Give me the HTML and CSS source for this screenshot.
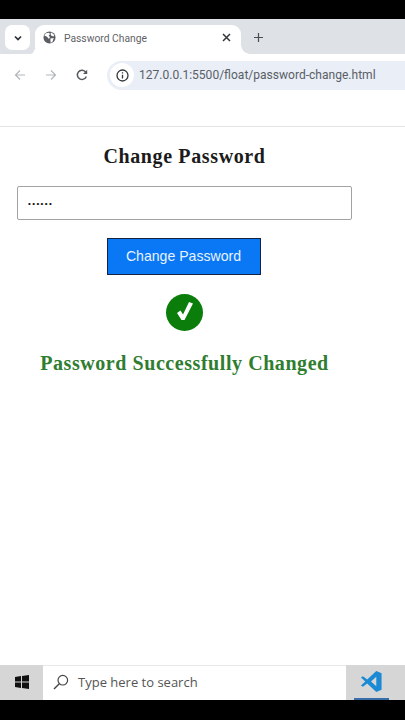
FILE: index.html
```html
<!DOCTYPE html>
<html lang="en">
<head>
<meta charset="utf-8">
<title>Password Change</title>
<link rel="stylesheet" href="styles.css">
</head>
<body>
<div class="screen">
  <div class="bar-black top"></div>
  <header class="tabstrip">
    <div class="tab-menu">
      <svg width="10" height="10" viewBox="0 0 10 10"><path d="M2 3.500 5 6.500 8 3.500" fill="none" stroke="#2b2f33" stroke-width="1.700"/></svg>
    </div>
    <div class="tab">
      <svg class="globe" width="13" height="13" viewBox="0 0 14 14"><circle cx="7" cy="7" r="6.500" fill="#5a5e63"/><path d="M3 2.500 6.500 2l1 1.500-1.500 1.500 1.500 1.500-1 2L4 6 1.500 5ZM9 1.500l3 2.500-.5 2-2.500-1-1-2ZM8 8l3.500-.5L10.500 11l-2 2L8 11Z" fill="#fff"/></svg>
      <span class="tab-title">Password Change</span>
      <svg class="tab-close" width="9" height="9" viewBox="0 0 9 9"><path d="M1 1 8 8M8 1 1 8" stroke="#33373b" stroke-width="1.500"/></svg>
    </div>
    <svg class="tab-new" width="9" height="9" viewBox="0 0 9 9"><path d="M4.500 0v9M0 4.500h9" stroke="#4a4e52" stroke-width="1.200"/></svg>
  </header>
  <nav class="toolbar">
    <svg class="nav-icon" width="12" height="12" viewBox="0 0 12 12"><path d="M11 6H1.500M6 1.500 1.500 6 6 10.500" fill="none" stroke="#b4b7ba" stroke-width="1.200"/></svg>
    <svg class="nav-icon" width="12" height="12" viewBox="0 0 12 12"><path d="M1 6h9.500M6 1.500 10.500 6 6 10.500" fill="none" stroke="#b4b7ba" stroke-width="1.200"/></svg>
    <svg class="nav-icon" width="12" height="12" viewBox="0 0 12 12"><path d="M10.300 7.500A4.600 4.600 0 1 1 9.400 2.800L10.800 4.300" fill="none" stroke="#54585c" stroke-width="1.400"/><path d="M11.200 .8V5H7Z" fill="#54585c"/></svg>
    <div class="omnibox">
      <span class="info">
        <svg width="13" height="13" viewBox="0 0 13 13"><circle cx="6.500" cy="6.500" r="5.500" fill="none" stroke="#33373b" stroke-width="1.300"/><path d="M6.500 5.800v3.600M6.500 3.200v1.400" stroke="#33373b" stroke-width="1.300"/></svg>
      </span>
      <span class="url">127.0.0.1:5500/float/password-change.html</span>
    </div>
  </nav>
  <div class="bookmarks"></div>
  <main class="page">
    <h1 class="title">Change Password</h1>
    <input class="field" type="password" value="123456" aria-label="New password">
    <button class="submit" type="button">Change Password</button>
    <div class="check">
      <svg width="37" height="37" viewBox="0 0 37 37"><circle cx="18.500" cy="18.500" r="18.500" fill="#0a7d0a"/><path d="M11 19 14.500 16.500 17 20.500 23 8 27 9.500 18.500 26 15.500 26Z" fill="#fff"/></svg>
    </div>
    <h2 class="success">Password Successfully Changed</h2>
  </main>
  <footer class="taskbar">
    <div class="start">
      <svg width="14" height="14" viewBox="0 0 14 14"><path d="M0 2 6 1.100V6.500H0ZM7 1 14 0V6.500H7ZM0 7.500H6V12.900L0 12ZM7 7.500H14V14L7 13Z" fill="#111"/></svg>
    </div>
    <div class="search">
      <svg width="16" height="16" viewBox="0 0 16 16"><circle cx="9.800" cy="6.200" r="4.800" fill="none" stroke="#444" stroke-width="1.200"/><path d="M6.300 9.700 1 15" stroke="#444" stroke-width="1.400"/></svg>
      <span class="search-text">Type here to search</span>
    </div>
    <div class="vscode">
      <svg width="23" height="23" viewBox="0 0 24 24"><path d="M17 1 22.500 3.500V20.500L17 23 7.500 14 3 17.500 1 16.200 5.500 12 1 7.800 3 6.500 7.500 10ZM17 7 11.500 12 17 17Z" fill="#1a8ad4"/></svg>
      <span class="vscode-active"></span>
    </div>
  </footer>
  <div class="bar-black bottom"></div>
</div>
</body>
</html>
```
FILE: styles.css
```css
* { box-sizing: border-box; }
html, body { margin: 0; padding: 0; background: #fff; overflow: hidden; }
.screen { width: 405px; height: 720px; display: flex; flex-direction: column; font-family: "Liberation Sans", Arial, sans-serif; }
.bar-black { background: #000; flex: none; }
.top { height: 19px; }
.bottom { height: 20px; }

.tabstrip { height: 35px; flex: none; background: #dee1e6; display: flex; align-items: flex-start; padding: 6px 0 0 5px; }
.tab-menu { width: 25px; height: 25px; background: #fff; border-radius: 7px; display: flex; align-items: center; justify-content: center; margin-right: 5px; }
.tab { position: relative; width: 206px; height: 29px; background: #fff; border-radius: 9px 9px 0 0; display: flex; align-items: center; padding: 0 10px 5px 8px; }
.tab::before, .tab::after { content: ""; position: absolute; bottom: 0; height: 4px; }
.tab::before { left: -5px; width: 5px; background: radial-gradient(circle at 0 0, #dee1e6 3.500px, #fff 4.500px); }
.tab::after { right: -9px; width: 9px; height: 9px; background: radial-gradient(circle at 100% 0, #dee1e6 8.500px, #fff 9px); }
.globe { flex: none; margin-right: 8px; }
.tab-title { flex: 1; padding-top: 2px; font-family: "Roboto", sans-serif; font-size: 10.300px; color: #5f6368; white-space: nowrap; }
.tab-new { margin: 8px 0 0 13px; }

.toolbar { height: 42px; flex: none; background: #fff; display: flex; align-items: center; padding: 0 0 0 14px; }
.nav-icon { flex: none; margin-right: 19px; }
.omnibox { flex: 1; height: 29px; background: #e9eef7; border-radius: 15px 0 0 15px; display: flex; align-items: center; padding-left: 3px; }
.info { width: 24px; height: 24px; border-radius: 50%; background: #fff; display: flex; align-items: center; justify-content: center; margin-right: 5px; }
.url { font-family: "Roboto", sans-serif; font-size: 12.050px; color: #5a5f66; white-space: nowrap; }
.bookmarks { height: 31px; flex: none; background: #fff; border-bottom: 1px solid #e4e4e4; }

.page { flex: 1; display: flex; flex-direction: column; align-items: center; width: 369px; font-family: "Liberation Serif", "Times New Roman", serif; }
.title { margin: 18px 0 0; font-size: 20px; line-height: 23px; font-weight: 700; color: #1b1b1b; letter-spacing: .63px; }
.field { width: 335px; height: 34px; margin-top: 18px; border: 1px solid #a2a2a2; border-radius: 2px; padding: 1px 10px 0; font-family: "Liberation Sans", Arial, sans-serif; font-size: 8px; letter-spacing: 1.400px; background: #fff; color: #111; outline: none; }
.submit { width: 154px; height: 37px; margin: 18px 2px 0 0; background: #0a78f5; border: 1px solid #14233f; color: #e8f2ff; font-family: "Liberation Sans", Arial, sans-serif; font-size: 14.100px; padding: 0 0 2px; }
.check { height: 37px; margin-top: 19px; }
.check svg { display: block; }
.success { margin: 21px 0 0; font-size: 20px; line-height: 23px; font-weight: 700; color: #2f7d2f; letter-spacing: .56px; white-space: nowrap; }

.taskbar { height: 35px; flex: none; background: #d6d6d6; display: flex; }
.start { width: 43px; padding: 0 0 1px; display: flex; align-items: center; justify-content: center; }
.search { width: 303px; background: #fff; display: flex; align-items: center; padding: 0 0 2px 10px; gap: 9px; border-top: 1px solid #e8e8e8; }
.search-text { font-family: "Open Sans", sans-serif; font-size: 13px; color: #555; white-space: nowrap; }
.vscode { position: relative; flex: 1; display: flex; align-items: center; justify-content: center; padding: 0 8px 2px 0; }
.vscode-active { position: absolute; left: 8px; width: 35px; bottom: 0; height: 2px; background: #3a6ea8; }
```
